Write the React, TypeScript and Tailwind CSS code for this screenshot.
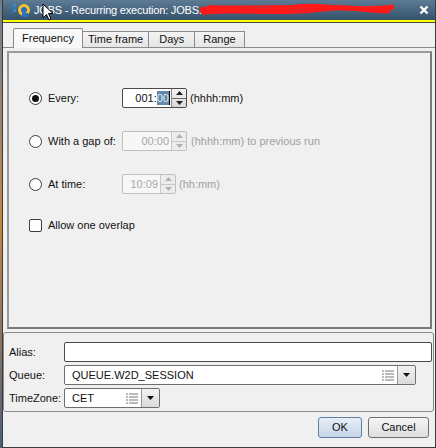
import React from "react";

const font = { fontFamily: '"Liberation Sans", Arial, sans-serif' };

function Radio({ checked }: { checked?: boolean }) {
  return (
    <span className="w-[13px] h-[13px] rounded-full border border-[#3c3c3c] bg-white flex items-center justify-center shrink-0">
      {checked && <span className="w-[7px] h-[7px] rounded-full bg-[#111]" />}
    </span>
  );
}

function SpinBtns({ disabled }: { disabled?: boolean }) {
  const c = disabled ? "#b0b0b0" : "#222";
  return (
    <div className={`w-[15px] h-full flex flex-col border-l ${disabled ? "border-[#c8c8c8] bg-[#ececec]" : "border-[#8a8a8a] bg-gradient-to-b from-[#f4f4f4] to-[#d8d8d8]"}`}>
      <div className={`flex-1 flex items-center justify-center border-b ${disabled ? "border-[#c8c8c8]" : "border-[#6a6a6a]"}`}>
        <svg width="7" height="4" viewBox="0 0 7 4"><path d="M0 4 L3.5 0 L7 4 Z" fill={c} /></svg>
      </div>
      <div className="flex-1 flex items-center justify-center">
        <svg width="7" height="4" viewBox="0 0 7 4"><path d="M0 0 L3.5 4 L7 0 Z" fill={c} /></svg>
      </div>
    </div>
  );
}

function Spinner({ value, width, disabled, selected }: { value: string; width: number; disabled?: boolean; selected?: boolean }) {
  return (
    <div
      className={`h-[20px] flex rounded-[2px] border ${disabled ? "border-[#c0c0c0] bg-[#f7f7f7]" : "border-[#4a4a4a] bg-white"}`}
      style={{ width }}
    >
      <div className={`flex-1 flex items-center justify-end pr-[1px] text-[11px] ${disabled ? "text-[#a8a8a8]" : "text-[#111]"}`}>
        {selected ? (
          <>
            <span>001:</span>
            <span className="bg-[#6389ac] text-[#dfe9f3] leading-[14px]">00</span>
            <span className="w-px h-[14px] bg-black" />
          </>
        ) : (
          <span className="pr-[1px]">{value}</span>
        )}
      </div>
      <SpinBtns disabled={disabled} />
    </div>
  );
}

function ListIcon() {
  return (
    <svg width="12" height="11" viewBox="0 0 12 11" className="shrink-0">
      {[1, 4, 7, 10].map((y) => (
        <g key={y}>
          <rect x="0" y={y - 0.5} width="2" height="1" fill="#777" />
          <rect x="3" y={y - 0.5} width="9" height="1" fill="#777" />
        </g>
      ))}
    </svg>
  );
}

function Combo({ value, className }: { value: string; className: string }) {
  return (
    <div className={`h-[20px] flex items-center rounded-[2px] border border-[#6e6e6e] bg-white ${className}`}>
      <span className="flex-1 pl-[7px] text-[11px] text-[#111]">{value}</span>
      <ListIcon />
      <div className="ml-[3px] w-[18px] h-full border-l border-[#9a9a9a] bg-gradient-to-b from-[#f3f3f3] to-[#dadada] flex items-center justify-center rounded-r-[2px]">
        <svg width="7" height="4" viewBox="0 0 7 4"><path d="M0 0 L3.5 4 L7 0 Z" fill="#111" /></svg>
      </div>
    </div>
  );
}

export default function App() {
  return (
    <div className="w-[436px] h-[448px] flex bg-[#f0f0f0] overflow-hidden text-[#111]" style={font}>
      {/* desktop edge */}
      <div className="w-[2px] h-full shrink-0 bg-gradient-to-b from-[#6b7f92] via-[#c7843a] to-[#4b5f7a]" />

      {/* Window */}
      <div className="flex-1 min-w-0 h-full flex flex-col border-l border-r border-b border-[#3a3a3a] relative overflow-hidden">
        {/* Title bar */}
        <div className="h-[20px] shrink-0 flex items-center bg-gradient-to-b from-[#5d7b95] to-[#35526b] pl-[10px] pr-[6px] overflow-hidden">
          <svg width="18" height="16" viewBox="0 0 18 16" className="shrink-0">
            <rect x="0" y="2" width="3" height="3" fill="#2f8ad8" />
            <rect x="0" y="7" width="3" height="3" fill="#2f8ad8" />
            <circle cx="11" cy="8" r="6" fill="#f2c230" />
            <circle cx="11" cy="8" r="3" fill="#2a6fc2" />
            <rect x="9" y="11" width="6" height="4" fill="#2a6fc2" />
          </svg>
          <span className="ml-[3px] text-[11px] tracking-[-0.2px] text-white whitespace-nowrap">JOBS - Recurring execution: JOBS.</span>
          <svg width="200" height="16" viewBox="0 0 200 16" className="shrink-0 -ml-[4px]">
            <path d="M2 8 C30 3 60 12 90 6 S150 11 196 5" stroke="#ff1a1a" strokeWidth="5" fill="none" />
            <path d="M4 11 C40 7 80 13 120 8 S170 11 192 9" stroke="#ff1a1a" strokeWidth="4" fill="none" />
            <path d="M10 4 C50 6 100 2 160 5" stroke="#ff1a1a" strokeWidth="2" fill="none" />
          </svg>
          <span className="flex-1" />
          <svg width="10" height="10" viewBox="0 0 10 10" className="shrink-0">
            <path d="M1.5 1.5 L8.5 8.5 M8.5 1.5 L1.5 8.5" stroke="white" strokeWidth="2.4" />
          </svg>
        </div>
        {/* mouse cursor */}
        <svg width="12" height="18" viewBox="0 0 12 18" className="absolute left-[39px] top-[3px]">
          <path d="M1 1 L1 15 L4.5 11.5 L7 17 L9 16 L6.5 10.5 L11 10.5 Z" fill="white" stroke="black" strokeWidth="1" />
        </svg>
        <div className="h-[2px] shrink-0 bg-[#ffff00]" />
        <div className="h-px shrink-0 bg-[#4a4a4a]" />

        {/* Tabs */}
        <div className="h-[25px] shrink-0 flex items-end pl-[10px] border-b border-[#8a8a8a]">
          <div className="h-[20px] px-[8px] flex items-center text-[11px] bg-[#f8f8f8] border border-b-0 border-[#8a8a8a] rounded-t-[2px] -mb-px pb-px">
            Frequency
          </div>
          <div className="h-[16px] px-[5px] flex items-center text-[11px] bg-gradient-to-b from-[#f3f3f3] to-[#e6e6e6] border border-l-0 border-b-0 border-[#8a8a8a]">
            Time frame
          </div>
          <div className="h-[16px] px-[10px] flex items-center text-[11px] bg-gradient-to-b from-[#f3f3f3] to-[#e6e6e6] border border-l-0 border-b-0 border-[#8a8a8a]">
            Days
          </div>
          <div className="h-[16px] px-[8px] flex items-center text-[11px] bg-gradient-to-b from-[#f3f3f3] to-[#e6e6e6] border border-l-0 border-b-0 border-[#8a8a8a]">
            Range
          </div>
        </div>

        {/* Frequency panel */}
        <div className="mt-[3px] ml-[4px] mr-[3px] h-[278px] shrink-0 border-2 border-[#9a9a9a] border-r-[#7a7a7a] border-b-[#7a7a7a] pt-[35px] pl-[20px] text-[11px]">
          <div className="h-[20px] flex items-center">
            <Radio checked />
            <span className="ml-[6px] w-[74px]">Every:</span>
            <Spinner value="001:00" width={65} selected />
            <span className="ml-[3px]">(hhhh:mm)</span>
          </div>
          <div className="mt-[23px] h-[20px] flex items-center">
            <Radio />
            <span className="ml-[6px] w-[74px]">With a gap of:</span>
            <Spinner value="00:00" width={65} disabled />
            <span className="ml-[4px] text-[#a0a0a0]">(hhhh:mm) to previous run</span>
          </div>
          <div className="mt-[23px] h-[20px] flex items-center">
            <Radio />
            <span className="ml-[6px] w-[74px]">At time:</span>
            <Spinner value="10:09" width={54} disabled />
            <span className="ml-[3px] text-[#a0a0a0]">(hh:mm)</span>
          </div>
          <div className="mt-[21px] h-[20px] flex items-center">
            <span className="w-[13px] h-[13px] border border-[#3c3c3c] bg-white rounded-[2px] shrink-0" />
            <span className="ml-[6px]">Allow one overlap</span>
          </div>
        </div>

        {/* Lower group */}
        <div className="mt-[3px] mr-[1px] h-[80px] shrink-0 border border-[#8a8a8a] rounded-[3px] pt-[9px] pl-[5px] pr-[1px] text-[11px] flex flex-col gap-[3px]">
          <div className="h-[20px] flex items-center">
            <span className="w-[55px]">Alias:</span>
            <div className="flex-1 h-[20px] rounded-[2px] border border-[#4a4a4a] bg-white" />
          </div>
          <div className="h-[20px] flex items-center">
            <span className="w-[55px]">Queue:</span>
            <Combo value="QUEUE.W2D_SESSION" className="w-[352px]" />
          </div>
          <div className="h-[20px] flex items-center">
            <span className="w-[55px]">TimeZone:</span>
            <Combo value="CET" className="w-[96px]" />
          </div>
        </div>

        {/* Buttons */}
        <div className="mt-[5px] flex justify-end gap-[6px] pr-[6px] text-[11px]">
          <button className="w-[44px] h-[21px] rounded-[3px] border border-[#5f7e9c] bg-gradient-to-b from-[#e6eef7] to-[#c6d6e7]">OK</button>
          <button className="w-[61px] h-[21px] rounded-[3px] border border-[#707070] bg-gradient-to-b from-[#f6f6f6] to-[#dedede]">Cancel</button>
        </div>
      </div>
    </div>
  );
}
